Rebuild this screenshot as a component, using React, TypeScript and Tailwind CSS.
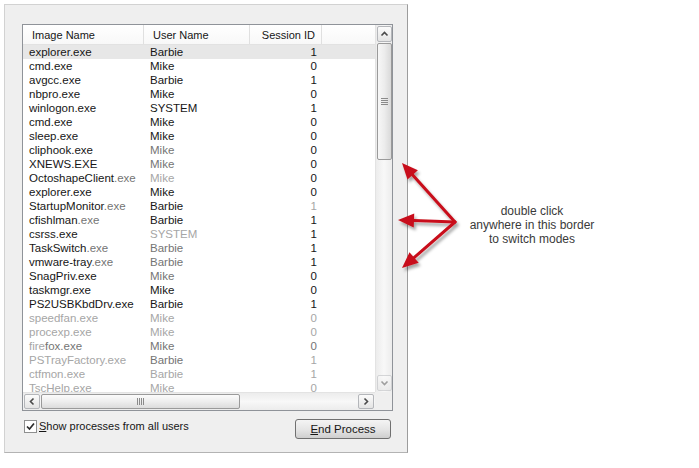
import React from 'react';

type Tone = 'k' | 'm' | 'g';

const toneClass: Record<Tone, string> = {
    k: 'text-[#161616]',
    m: 'text-[#747474]',
    g: 'text-[#a6a6a6]'
};

// name segments are split on "|", with one tone letter per segment
type Row = [string, string, string, Tone, string, Tone];

const rows: Row[] = [
    ['explorer.exe', 'k', 'Barbie', 'k', '1', 'k'],
    ['cmd.exe', 'k', 'Mike', 'k', '0', 'k'],
    ['avgcc.exe', 'k', 'Barbie', 'k', '1', 'k'],
    ['nbpro.exe', 'k', 'Mike', 'k', '0', 'k'],
    ['winlogon.exe', 'k', 'SYSTEM', 'k', '1', 'k'],
    ['cmd.exe', 'k', 'Mike', 'k', '0', 'k'],
    ['sleep.exe', 'k', 'Mike', 'k', '0', 'k'],
    ['cliphook.exe', 'k', 'Mike', 'm', '0', 'k'],
    ['XNEWS.EXE', 'k', 'Mike', 'm', '0', 'k'],
    ['OctoshapeClient|.exe', 'km', 'Mike', 'g', '0', 'k'],
    ['explorer.exe', 'k', 'Mike', 'k', '0', 'k'],
    ['StartupMonitor|.exe', 'km', 'Barbie', 'k', '1', 'g'],
    ['cfishlman|.exe', 'km', 'Barbie', 'k', '1', 'k'],
    ['csrss.exe', 'k', 'SYSTEM', 'g', '1', 'k'],
    ['TaskSwitch|.exe', 'km', 'Barbie', 'm', '1', 'k'],
    ['vmware-tray|.exe', 'km', 'Barbie', 'm', '1', 'k'],
    ['SnagPriv.exe', 'k', 'Mike', 'm', '0', 'k'],
    ['taskmgr.exe', 'k', 'Mike', 'k', '0', 'k'],
    ['PS2USBKbdDrv.exe', 'k', 'Barbie', 'k', '1', 'k'],
    ['speedfan.exe', 'g', 'Mike', 'g', '0', 'g'],
    ['procexp.exe', 'g', 'Mike', 'g', '0', 'g'],
    ['fire|fox.exe', 'gm', 'Mike', 'm', '0', 'm'],
    ['PSTrayFactory.exe', 'g', 'Barbie', 'm', '1', 'g'],
    ['ctfmon.exe', 'g', 'Barbie', 'g', '1', 'g'],
    ['TscHelp.exe', 'g', 'Mike', 'g', '0', 'g']
];

const Chevron = ({ dir }: { dir: 'up' | 'down' | 'left' | 'right' }) => {
    const d = {
        up: 'M1.5 5.5 L4.5 2.5 L7.5 5.5',
        down: 'M1.5 2.5 L4.5 5.5 L7.5 2.5',
        left: 'M5.5 1.5 L2.5 4.5 L5.5 7.5',
        right: 'M2.5 1.5 L5.5 4.5 L2.5 7.5'
    }[dir];
    return (
        <svg width="9" height="9" viewBox="0 0 9 9">
            <path d={d} fill="none" stroke="#4a4a4a" strokeWidth="1.6" />
        </svg>
    );
};

const ScrollButton = ({ dir, faded }: { dir: 'up' | 'down' | 'left' | 'right'; faded?: boolean }) => (
    <div
        className={`w-[15px] h-[16px] flex items-center justify-center rounded-[2px] border border-[#b4b6ba] bg-gradient-to-b from-[#fbfbfb] to-[#e4e4e4] ${faded ? 'opacity-50' : ''}`}
    >
        <Chevron dir={dir} />
    </div>
);

const Arrow = ({ from, to }: { from: [number, number]; to: [number, number] }) => {
    const dx = to[0] - from[0];
    const dy = to[1] - from[1];
    const len = Math.hypot(dx, dy);
    const ux = dx / len;
    const uy = dy / len;
    const bx = to[0] - 16 * ux;
    const by = to[1] - 16 * uy;
    const nx = -uy * 7;
    const ny = ux * 7;
    const head = `${to[0]},${to[1]} ${bx + nx},${by + ny} ${bx - nx},${by - ny}`;
    return (
        <g>
            <line x1={from[0]} y1={from[1]} x2={bx} y2={by} stroke="#c8101a" strokeWidth="3" strokeLinecap="round" />
            <polygon points={head} fill="#c8101a" />
        </g>
    );
};

export default function App() {
    return (
        <div className="relative w-[699px] h-[468px] bg-white overflow-hidden font-['Liberation_Sans',Arial,sans-serif] text-[11px] leading-[14px] text-[#161616]">
            <div className="flex pt-[4px] pl-[4px]">
                <div className="w-[404px] h-[449px] bg-[#efefef] border border-[#d2d2d2] border-r-[#9c9c9c] border-b-[#b3b3b3] pl-[17px] pt-[19px] flex flex-col">
                    <div className="w-[371px] h-[387px] border border-[#8f9399] bg-white grid grid-cols-[352px_17px] grid-rows-[367px_18px]">
                        <div className="flex flex-col overflow-hidden">
                            <div className="h-[20px] flex items-stretch border-b border-[#e2e2e2] bg-gradient-to-b from-white to-[#f8f8f8] shrink-0">
                                <div className="w-[121px] pl-[9px] flex items-center border-r border-[#e0e0e0]">Image Name</div>
                                <div className="w-[106px] pl-[9px] flex items-center border-r border-[#e0e0e0]">User Name</div>
                                <div className="w-[72px] pr-[6px] flex items-center justify-end border-r border-[#e0e0e0]">Session ID</div>
                                <div className="flex-1" />
                            </div>
                            <div className="flex-1 overflow-hidden text-[11.5px]">
                                {rows.map(([name, nameTones, user, userTone, session, sessionTone], i) => (
                                    <div key={i} className={`h-[14px] flex items-center ${i === 0 ? 'bg-[#e7e7e7]' : ''}`}>
                                        <div className="w-[121px] pl-[6px] whitespace-nowrap">
                                            {name.split('|').map((seg, j) => (
                                                <span key={j} className={toneClass[(nameTones[j] || 'k') as Tone]}>
                                                    {seg}
                                                </span>
                                            ))}
                                        </div>
                                        <div className={`w-[106px] pl-[6px] ${toneClass[userTone]}`}>{user}</div>
                                        <div className={`w-[72px] pr-[5px] text-right ${toneClass[sessionTone]}`}>{session}</div>
                                    </div>
                                ))}
                            </div>
                        </div>

                        <div className="flex flex-col items-center bg-gradient-to-r from-[#ececec] via-[#f8f8f8] to-[#ececec] border-l border-[#e3e3e3] pt-[1px] pb-[1px]">
                            <ScrollButton dir="up" />
                            <div className="w-[15px] h-[117px] mt-[1px] rounded-[2px] border border-[#9a9a9a] bg-gradient-to-r from-[#f7f7f7] via-[#ececec] to-[#d9d9d9] flex flex-col items-center justify-center gap-[1px]">
                                <div className="w-[7px] h-[1px] bg-[#8a8a8a]" />
                                <div className="w-[7px] h-[1px] bg-[#8a8a8a]" />
                                <div className="w-[7px] h-[1px] bg-[#8a8a8a]" />
                                <div className="w-[7px] h-[1px] bg-[#8a8a8a]" />
                            </div>
                            <div className="flex-1" />
                            <ScrollButton dir="down" faded />
                        </div>

                        <div className="flex items-center bg-gradient-to-b from-[#ececec] via-[#f8f8f8] to-[#ececec] border-t border-[#e3e3e3] pl-[1px] pr-[1px]">
                            <div className="w-[16px] h-[15px] flex items-center justify-center rounded-[2px] border border-[#b4b6ba] bg-gradient-to-b from-[#fbfbfb] to-[#e4e4e4]">
                                <Chevron dir="left" />
                            </div>
                            <div className="w-[199px] h-[15px] ml-[1px] rounded-[2px] border border-[#9a9a9a] bg-gradient-to-b from-[#fbfbfb] via-[#eeeeee] to-[#dcdcdc] flex items-center justify-center gap-[1px]">
                                <div className="w-[1px] h-[7px] bg-[#8a8a8a]" />
                                <div className="w-[1px] h-[7px] bg-[#8a8a8a]" />
                                <div className="w-[1px] h-[7px] bg-[#8a8a8a]" />
                                <div className="w-[1px] h-[7px] bg-[#8a8a8a]" />
                            </div>
                            <div className="flex-1" />
                            <div className="w-[16px] h-[15px] flex items-center justify-center rounded-[2px] border border-[#b4b6ba] bg-gradient-to-b from-[#fbfbfb] to-[#e4e4e4]">
                                <Chevron dir="right" />
                            </div>
                        </div>
                        <div className="bg-[#efefef]" />
                    </div>

                    <div className="w-[371px] flex justify-between items-start mt-[8px] pl-[2px] pr-[2px]">
                        <label className="flex items-center gap-[2px] h-[14px]">
                            <span className="w-[13px] h-[13px] border border-[#8e8f8f] bg-white flex items-center justify-center">
                                <svg width="9" height="9" viewBox="0 0 9 9">
                                    <path d="M1 4.5 L3.5 7 L8 1.5" fill="none" stroke="#2a2a2a" strokeWidth="1.7" />
                                </svg>
                            </span>
                            <span>
                                <span className="underline">S</span>how processes from all users
                            </span>
                        </label>
                        <button className="w-[96px] h-[20px] rounded-[3px] border border-[#707070] bg-gradient-to-b from-[#f4f4f4] via-[#e6e6e6] to-[#cfcfcf] text-[#161616] text-[11.5px] leading-[14px] font-['Liberation_Sans',Arial,sans-serif]">
                            <span className="underline">E</span>nd Process
                        </button>
                    </div>
                </div>

                <div className="flex-1 pr-[43px] pt-[200px] text-center text-[12px] leading-[14px] text-[#3a3a3a]">
                    <div>double click</div>
                    <div>anywhere in this border</div>
                    <div>to switch modes</div>
                </div>
            </div>

            <svg className="absolute inset-0 pointer-events-none" width="699" height="468">
                <defs>
                    <filter id="shadow" x="-20%" y="-20%" width="140%" height="140%">
                        <feDropShadow dx="2" dy="3" stdDeviation="1.5" floodColor="#000" floodOpacity="0.35" />
                    </filter>
                </defs>
                <g filter="url(#shadow)">
                    <Arrow from={[455, 222]} to={[402, 163]} />
                    <Arrow from={[455, 222]} to={[398, 220]} />
                    <Arrow from={[455, 222]} to={[402, 268]} />
                </g>
            </svg>
        </div>
    );
}
